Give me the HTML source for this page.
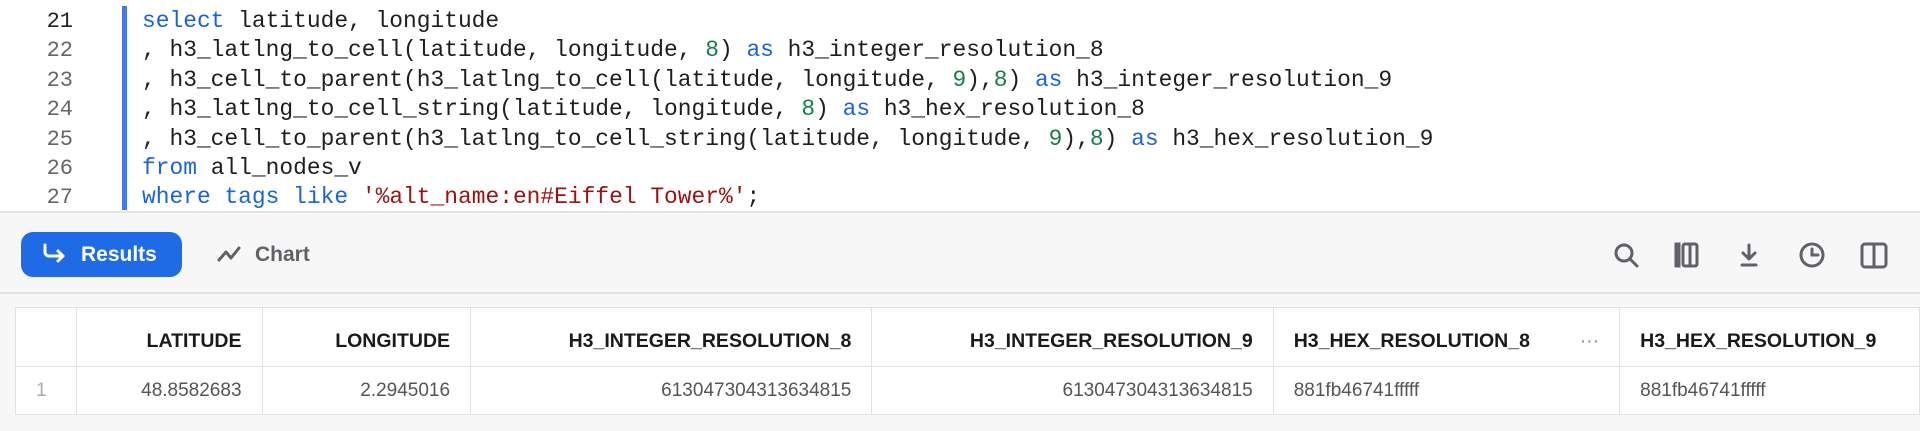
<!DOCTYPE html>
<html><head><meta charset="utf-8"><style>
*{box-sizing:border-box;margin:0;padding:0}
body{width:1920px;height:431px;background:#f7f7f7;font-family:"Liberation Sans",sans-serif;overflow:hidden;position:relative}
.code{position:absolute;left:0;top:0;width:1920px;height:213px;background:#fff;border-bottom:2px solid #e4e4e6}
.ln{position:absolute;left:20px;top:7px;width:53px;text-align:right;font-family:"Liberation Mono",monospace;font-size:22px;color:#666;line-height:29.4px}
.bar{position:absolute;left:122px;top:6px;width:5px;height:204px;background:#3b7af0}
.src{position:absolute;left:142px;top:7px;font-family:"Liberation Mono",monospace;font-size:22.9px;line-height:29.4px;color:#1e1e1e;white-space:pre}
.k{color:#1b63d6}.n{color:#148048}.s{color:#9a1212}
.tb{position:absolute;left:0;top:213px;width:1920px;height:81px;border-bottom:2px solid #e4e4e6;background:#f7f7f8}
.btn{position:absolute;left:21px;top:19px;width:161px;height:45px;background:#1f6be6;border-radius:12px;color:#fff;font-weight:bold;font-size:21px}
.btn span{position:absolute;left:60px;top:11px}
.chart{position:absolute;left:255px;top:30px;font-size:21px;font-weight:bold;color:#606268}
.ic{position:absolute;top:28px}
table{position:absolute;left:15px;top:307px;border-collapse:collapse;background:#fff;font-size:19px}
td,th{border:1.5px solid #e2e2e2;height:48px;padding:0 20px;white-space:nowrap}
th{height:59px;padding-top:8px;font-weight:bold;font-size:19.5px;color:#1a1a1a;text-align:right}
td{color:#555;text-align:right}
.l{text-align:left}
</style></head><body>
<div class="code">
<div class="ln"><span style="color:#222">21</span><br>22<br>23<br>24<br>25<br>26<br>27</div>
<div class="bar"></div>
<div class="src"><span class="k">select</span> latitude, longitude
, h3_latlng_to_cell(latitude, longitude, <span class="n">8</span>) <span class="k">as</span> h3_integer_resolution_8
, h3_cell_to_parent(h3_latlng_to_cell(latitude, longitude, <span class="n">9</span>),<span class="n">8</span>) <span class="k">as</span> h3_integer_resolution_9
, h3_latlng_to_cell_string(latitude, longitude, <span class="n">8</span>) <span class="k">as</span> h3_hex_resolution_8
, h3_cell_to_parent(h3_latlng_to_cell_string(latitude, longitude, <span class="n">9</span>),<span class="n">8</span>) <span class="k">as</span> h3_hex_resolution_9
<span class="k">from</span> all_nodes_v
<span class="k">where</span> <span class="k">tags</span> <span class="k">like</span> <span class="s">'%alt_name:en#Eiffel Tower%'</span>;</div>
</div>
<div class="tb">
<div class="btn"><svg style="position:absolute;left:20px;top:11px" width="26" height="22" viewBox="0 0 26 22" fill="none" stroke="#fff" stroke-width="3" stroke-linecap="round" stroke-linejoin="round"><path d="M4 2v7a4 4 0 0 0 4 4h14M17 8l5 5-5 5"/></svg><span>Results</span></div>
<svg style="position:absolute;left:217px;top:32px" width="24" height="18" viewBox="0 0 24 18" fill="none" stroke="#606268" stroke-width="3" stroke-linecap="round" stroke-linejoin="round"><path d="M2 15l7-8 5 6 8-10"/></svg>
<div class="chart">Chart</div>
<svg class="ic" style="left:1612px" width="28" height="28" viewBox="0 0 28 28" fill="none" stroke="#606268" stroke-width="3" stroke-linecap="round"><circle cx="12" cy="12" r="8"/><path d="M18 18l7 7"/></svg>
<svg class="ic" style="left:1674px" width="26" height="28" viewBox="0 0 26 28" fill="none" stroke="#606268" stroke-width="3"><rect x="2" y="3" width="3" height="22" fill="#606268"/><rect x="9" y="3" width="14" height="22" rx="2"/><path d="M16 3v22"/></svg>
<svg class="ic" style="left:1737px" width="24" height="28" viewBox="0 0 24 28" fill="none" stroke="#606268" stroke-width="3" stroke-linecap="round" stroke-linejoin="round"><path d="M12 4v13M6 12l6 6 6-6M5 24h14"/></svg>
<svg class="ic" style="left:1798px" width="28" height="28" viewBox="0 0 28 28" fill="none" stroke="#606268" stroke-width="3" stroke-linecap="round"><circle cx="14" cy="14" r="11"/><path d="M14 8v6h6"/></svg>
<svg class="ic" style="left:1860px" width="28" height="28" viewBox="0 0 28 28" fill="none" stroke="#606268" stroke-width="3"><rect x="2" y="3" width="24" height="23" rx="3"/><path d="M14 3v23"/></svg>
</div>
<table>
<tr><th style="width:61px"></th><th style="width:186px">LATITUDE</th><th style="width:209px">LONGITUDE</th><th style="width:402px">H3_INTEGER_RESOLUTION_8</th><th style="width:402px">H3_INTEGER_RESOLUTION_9</th><th class="l" style="width:347px;position:relative">H3_HEX_RESOLUTION_8<span style="position:absolute;right:20px;color:#888;font-weight:normal">···</span></th><th class="l" style="width:300px">H3_HEX_RESOLUTION_9</th></tr>
<tr><td style="color:#aaa;text-align:left">1</td><td>48.8582683</td><td>2.2945016</td><td>613047304313634815</td><td>613047304313634815</td><td class="l">881fb46741fffff</td><td class="l">881fb46741fffff</td></tr>
</table>
</body></html>
